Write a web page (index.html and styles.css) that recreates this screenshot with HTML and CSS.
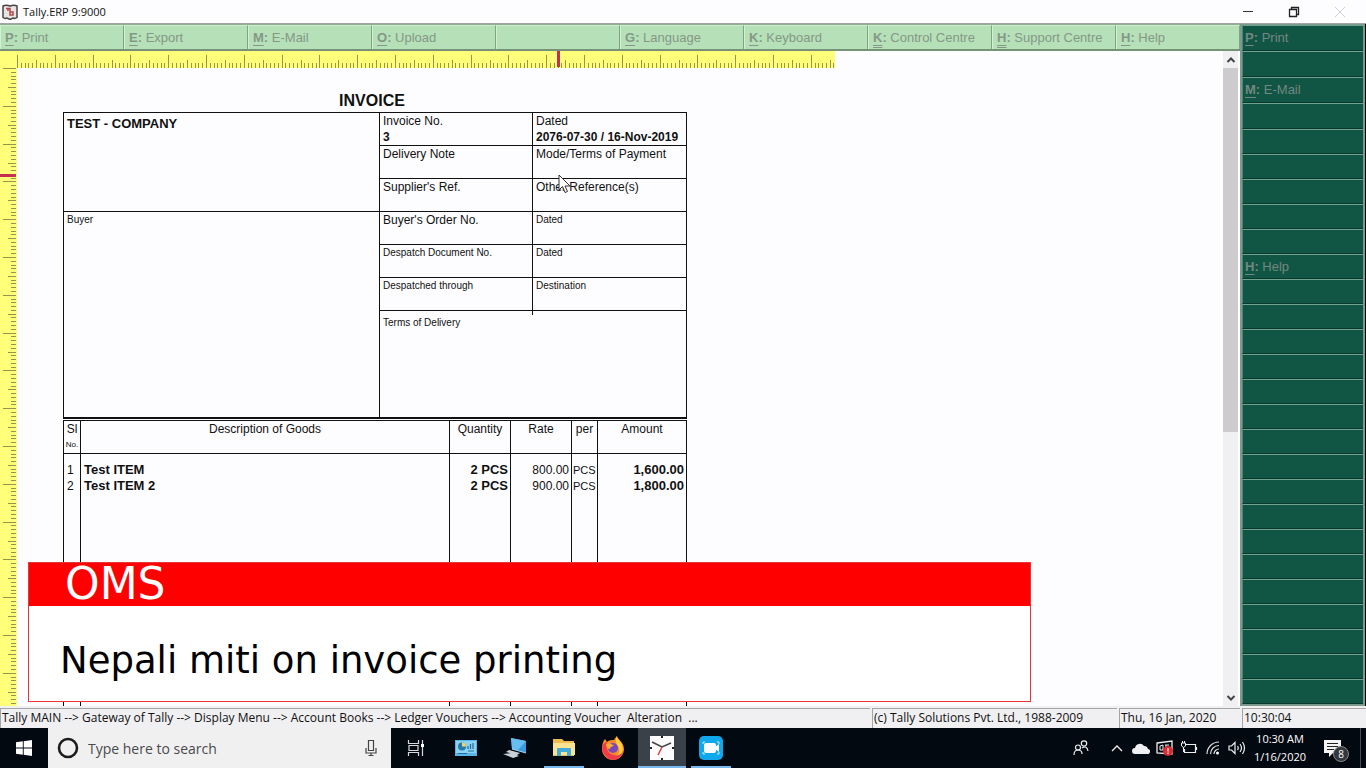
FILE: index.html
```
<!DOCTYPE html>
<html lang="en">
<head>
  <meta charset="UTF-8" />
  <title>Tally.ERP 9:9000</title>
  <link rel="stylesheet" href="styles.css">
</head>
<body>
  <header class="titlebar">
    <svg class="app-icon" width="16" height="16" viewBox="0 0 16 16">
      <path d="M1 2q3-1.500 7 0q4-1.500 7 0v11.500q-2 1.500-4 .5l-3 1.500-3-1.500q-2 1-4-.5z" fill="#e9e4e4" stroke="#4a4444" stroke-width="1.500"/>
      <path d="M4 4.500h4v3M6 4v3M8 8h3v3H8z" fill="none" stroke="#b0484c" stroke-width="1.500"/>
    </svg>
    <span class="app-title">Tally.ERP 9:9000</span>
    <div class="win-buttons">
      <button aria-label="Minimize"><svg width="12" height="12" viewBox="0 0 12 12"><path d="M1 5.500h10" stroke="#333" fill="none"/></svg></button>
      <button aria-label="Restore"><svg width="12" height="12" viewBox="0 0 12 12"><path d="M1.500 3.500h7v7h-7zM3.500 3V1.500h7v7H9" stroke="#222" stroke-width="1.300" fill="none"/></svg></button>
      <button aria-label="Close"><svg width="12" height="12" viewBox="0 0 12 12"><path d="M1 1l10 10M11 1L1 11" stroke="#d2d0d2" fill="none"/></svg></button>
    </div>
  </header>

  <main class="workspace">
    <section class="left">
      <nav class="toolbar">
        <button><b>P</b><i>:</i> Print</button>
        <button><b>E</b><i>:</i> Export</button>
        <button><b>M</b><i>:</i> E-Mail</button>
        <button><b>O</b><i>:</i> Upload</button>
        <button aria-label="Empty"></button>
        <button><b>G</b><i>:</i> Language</button>
        <button><b>K</b><i>:</i> Keyboard</button>
        <button><b class="dbl">K</b><i>:</i> Control Centre</button>
        <button><b class="dbl">H</b><i>:</i> Support Centre</button>
        <button><b>H</b><i>:</i> Help</button>
      </nav>

      <div class="viewer">
        <div class="page">
          <div class="ruler-h">
            <svg width="100%" height="17" shape-rendering="crispEdges">
              <path d="M17 14.500H2000" stroke-width="5" stroke-dasharray="1 2.780"/>
              <path d="M36 13H2000" stroke-width="8" stroke-dasharray="1 36.800"/>
              <path d="M17 10.500H2000" stroke-width="13" stroke-dasharray="1 36.800"/>
            </svg>
            <span class="mark"></span>
          </div>
          <div class="sheet">
            <div class="ruler-v">
              <svg width="16" height="100%" shape-rendering="crispEdges">
                <path d="M13.500 0V2000" stroke-width="5" stroke-dasharray="1 2.780"/>
                <path d="M12 19V2000" stroke-width="8" stroke-dasharray="1 36.800"/>
                <path d="M9.500 0V2000" stroke-width="13" stroke-dasharray="1 36.800"/>
              </svg>
              <span class="mark"></span>
            </div>

            <article class="invoice">
              <h1>INVOICE</h1>
              <div class="head">
                <div class="party">
                  <div class="company">TEST - COMPANY</div>
                  <div class="buyer">Buyer</div>
                </div>
                <div class="info">
                  <div>Invoice No.<strong>3</strong></div>
                  <div>Dated<strong>2076-07-30 / 16-Nov-2019</strong></div>
                  <div>Delivery Note</div>
                  <div>Mode/Terms of Payment</div>
                  <div>Supplier's Ref.</div>
                  <div>Other Reference(s)</div>
                  <div>Buyer's Order No.</div>
                  <div class="small">Dated</div>
                  <div class="small">Despatch Document No.</div>
                  <div class="small">Dated</div>
                  <div class="small">Despatched through</div>
                  <div class="small">Destination</div>
                  <div class="small terms">Terms of Delivery</div>
                </div>
              </div>
              <table class="items">
                <colgroup>
                  <col class="c-sl"><col><col class="c-qty"><col class="c-rate"><col class="c-per"><col class="c-amt">
                </colgroup>
                <thead>
                  <tr><th class="sl">Sl<small>No.</small></th><th>Description of Goods</th><th>Quantity</th><th>Rate</th><th>per</th><th>Amount</th></tr>
                </thead>
                <tbody>
                  <tr class="first"><td>1</td><td class="item">Test ITEM</td><td class="num bold">2 PCS</td><td class="num">800.00</td><td class="per">PCS</td><td class="num bold">1,600.00</td></tr>
                  <tr><td>2</td><td class="item">Test ITEM 2</td><td class="num bold">2 PCS</td><td class="num">900.00</td><td class="per">PCS</td><td class="num bold">1,800.00</td></tr>
                  <tr class="rest"><td></td><td></td><td></td><td></td><td></td><td></td></tr>
                </tbody>
              </table>
            </article>
          </div>
        </div>
        <div class="scrollbar">
          <button aria-label="Scroll up"><svg width="10" height="8" viewBox="0 0 10 8"><path d="M1.500 6L5 2.500 8.500 6" stroke="#444" stroke-width="2" fill="none"/></svg></button>
          <div class="track"><div class="thumb"></div></div>
          <button aria-label="Scroll down"><svg width="10" height="8" viewBox="0 0 10 8"><path d="M1.500 2L5 5.500 8.500 2" stroke="#444" stroke-width="2" fill="none"/></svg></button>
        </div>
      </div>
    </section>

    <aside class="sidebar">
      <button><b>P</b><i>:</i> Print</button>
      <button aria-label="Empty"></button>
      <button><b>M</b><i>:</i> E-Mail</button>
      <button aria-label="Empty"></button>
      <button aria-label="Empty"></button>
      <button aria-label="Empty"></button>
      <button aria-label="Empty"></button>
      <button aria-label="Empty"></button>
      <button aria-label="Empty"></button>
      <button><b>H</b><i>:</i> Help</button>
      <button aria-label="Empty"></button>
      <button aria-label="Empty"></button>
      <button aria-label="Empty"></button>
      <button aria-label="Empty"></button>
      <button aria-label="Empty"></button>
      <button aria-label="Empty"></button>
      <button aria-label="Empty"></button>
      <button aria-label="Empty"></button>
      <button aria-label="Empty"></button>
      <button aria-label="Empty"></button>
      <button aria-label="Empty"></button>
      <button aria-label="Empty"></button>
      <button aria-label="Empty"></button>
      <button aria-label="Empty"></button>
      <button aria-label="Empty"></button>
      <button aria-label="Empty"></button>
      <button aria-label="Empty"></button>
    </aside>
  </main>

  <footer class="status">
    <span class="path">Tally MAIN --&gt; Gateway of Tally --&gt; Display Menu --&gt; Account Books --&gt; Ledger Vouchers --&gt; Accounting Voucher&nbsp; Alteration&nbsp; ...</span>
    <span class="copy">(c) Tally Solutions Pvt. Ltd., 1988-2009</span>
    <span class="date">Thu, 16 Jan, 2020</span>
    <span class="time">10:30:04</span>
  </footer>

  <div class="taskbar">
    <button class="start" aria-label="Start">
      <svg width="16" height="16" viewBox="0 0 16 16"><path d="M0 2.300l6.800-1v6.200H0zM7.700 1.200L16 0v7.500H7.700zM0 8.500h6.800v6.200l-6.800-1zM7.700 8.500H16V16l-8.300-1.200z" fill="#fff"/></svg>
    </button>
    <label class="search">
      <svg width="22" height="22" viewBox="0 0 22 22"><circle cx="11" cy="11" r="9" fill="none" stroke="#1c1c1e" stroke-width="2.600"/></svg>
      <input type="text" placeholder="Type here to search" aria-label="Search">
      <svg width="14" height="18" viewBox="0 0 14 18"><path d="M4.500 1.500h5v10h-5zM2 9v5h10V9M7 14v3M4.500 16.500h5" fill="none" stroke="#444" stroke-width="1.200"/></svg>
    </label>

    <div class="apps">
      <button aria-label="Task View">
        <svg width="18" height="16" viewBox="0 0 18 16"><path d="M1.500 0v3.500h10V0M1.500 16v-3.500h10V16M2 5.500h9v5H2zM15.500 0v16" fill="none" stroke="#d8d8dc" stroke-width="1.200"/><path d="M14 4h3v3h-3z" fill="#fff"/></svg>
      </button>
      <button aria-label="Control Panel">
        <svg width="22" height="16" viewBox="0 0 22 16"><path d="M0 0h22v16H0z" fill="#58b5e6"/><path d="M1 1h20v12H1z" fill="#8bd3f5"/><circle cx="7" cy="6.500" r="4" fill="#2779a8"/><path d="M7 6.500V2.500a4 4 0 0 1 4 4z" fill="#f5d56a"/><path d="M13 9V6M15.500 9V4M18 9V3M13 11h6M3 13.500h9" stroke="#236b9c" stroke-width="1.200"/></svg>
      </button>
      <button aria-label="Computer">
        <svg width="24" height="22" viewBox="0 0 24 22"><path d="M8 1l15 3v12L9 12z" fill="#379de0"/><path d="M8 1l15 3-8 9-6-1z" fill="#65bdf0"/><path d="M9 12l14 4" stroke="#a9d7ef"/><path d="M6 13l11 3-3 2-11-3zM0 17l9-1 7 3-6 2z" fill="#c9d2d8"/></svg>
      </button>
      <button class="running" aria-label="File Explorer">
        <svg width="22" height="20" viewBox="0 0 22 20"><path d="M0 1h9l2 2h10v15H0z" fill="#edbd51"/><path d="M0 5h22v12H0z" fill="#fce293"/><path d="M4 18v-7q0-1 1-1h12q1 0 1 1v7h-4v-4H8v4z" fill="#43abd8"/></svg>
      </button>
      <button aria-label="Firefox">
        <svg width="24" height="24" viewBox="0 0 24 24"><path d="M4 3l2 3c2-2 5-2 7-2 1-2 2-3 3-4 0 3 7 6 7 13a11 11 0 0 1-22 0C1 9 2 5 4 3z" fill="#ff8b27"/><path d="M16 0c0 4 4 5 5 9 3 7-4 14-10 13 7-2 9-7 6-12-2-3-3-5-1-10z" fill="#ffd33e"/><path d="M1.200 11c0 6 4 12 10.800 13 5 0 9-4 10-8-4 5-13 5-16-3-1-3 0-6 0-7-2 0-4 2-4.800 5z" fill="#f23a4d"/><circle cx="12" cy="12" r="5" fill="#7948bd"/><path d="M5 8c3-2 5 1 8 1-1 2-4 1-4 4-2 0-4-2-4-5z" fill="#ffae32"/></svg>
      </button>
      <button class="active" aria-label="Tally">
        <svg width="24" height="24" viewBox="0 0 24 24"><path d="M0 0h24v24H0z" fill="#fcfcfc"/><path d="M12 0v2M12 22v2M0 12h2M22 12h2" stroke="#222" stroke-width="2"/><path d="M2 6l10 5 9-4" fill="none" stroke="#444" stroke-width="1.500"/><path d="M12 11l-4 8" stroke="#d94545" stroke-width="1.500"/></svg>
      </button>
      <button class="running" aria-label="Zoom">
        <svg width="24" height="24" viewBox="0 0 24 24"><rect width="24" height="24" rx="5" fill="#10a8ec"/><rect x="5" y="7" width="12" height="10" rx="2" fill="#f4fcff"/><path d="M16 11l4-3v8l-4-3z" fill="#f4fcff"/><path d="M4 8V6h2M18 6h2v2M4 16v2h2M18 18h2v-2" fill="none" stroke="#c7effd"/></svg>
      </button>
    </div>

    <div class="tray">
      <button class="people" aria-label="People"><svg width="16" height="16" viewBox="0 0 16 16"><g fill="none" stroke="#eee" stroke-width="1.200"><circle cx="11" cy="3.500" r="2.700"/><circle cx="5" cy="7.500" r="2.500"/><path d="M1 15q0-5 4-5t4 4M9 8q5-3 6 3"/></g></svg></button>
      <button aria-label="Show hidden icons"><svg width="12" height="8" viewBox="0 0 12 8"><path d="M1 7l5-5 5 5" fill="none" stroke="#eee" stroke-width="1.300"/></svg></button>
      <button aria-label="OneDrive"><svg width="18" height="11" viewBox="0 0 18 11"><path d="M3 11a3 3 0 0 1 0-6 5 5 0 0 1 9-2 4 4 0 0 1 4 3 2.500 2.500 0 0 1-1 5z" fill="#f0f0f2"/></svg></button>
      <button aria-label="Security alert"><svg width="18" height="16" viewBox="0 0 18 16"><path d="M1 3l15-2v13L1 13z" fill="none" stroke="#eee" stroke-width="1.300"/><path d="M4 10V6l3-1v5zM9 5h4M10 5v4" stroke="#eee" fill="none"/><circle cx="12" cy="11" r="5" fill="#e02a31"/><path d="M12 8v3.500M12 12.500v1.500" stroke="#fff" stroke-width="1.300"/></svg></button>
      <button aria-label="Battery"><svg width="18" height="14" viewBox="0 0 18 14"><path d="M6 3.500h9.500v8h-11V8M16.500 6v3" fill="none" stroke="#eee" stroke-width="1.200"/><path d="M1.500 2v3q2 3 4 0V2zM2.500 0v2M4.500 0v2M3.500 6v5" fill="none" stroke="#eee"/></svg></button>
      <button aria-label="Wi-Fi"><svg width="14" height="14" viewBox="0 0 14 14"><g fill="none" stroke="#ddd" stroke-width="1.200"><path d="M1 13A12 12 0 0 1 13 1M4.500 13A8.500 8.500 0 0 1 13 4.500M8 13a5 5 0 0 1 5-5"/></g><circle cx="11.500" cy="12" r="1.500" fill="#fff"/></svg></button>
      <button aria-label="Volume"><svg width="18" height="14" viewBox="0 0 18 14"><path d="M1 5h2.500L7 1.500v11L3.500 9H1zM9.500 5q1.500 2 0 4M12 3q3 4 0 8M14.500 1q4 6 0 12" fill="none" stroke="#eee" stroke-width="1.200"/></svg></button>
      <div class="clock"><span>10:30 AM</span><span>1/16/2020</span></div>
      <button class="notes" aria-label="Notifications">
        <svg width="17" height="17" viewBox="0 0 17 17"><path d="M0 0h17v13H9l-4 4v-4H0z" fill="#f5f5f5"/><path d="M3 3.500h11M3 6.500h11M3 9.500h7" stroke="#222"/></svg>
        <span class="badge">8</span>
      </button>
    </div>
  </div>

  <!-- caption over the window -->
  <div class="caption">
    <div class="caption-head">OMS</div>
    <div class="caption-text">Nepali miti on invoice printing</div>
  </div>

  <svg class="pointer" width="13" height="20" viewBox="0 0 13 20"><path d="M1 1v15l3.500-3.500L7 18.500l2.500-1L7 12h5z" fill="#fff" stroke="#333"/></svg>
</body>
</html>
```

FILE: styles.css
```
* { box-sizing:border-box; }
body {
  display:flex; flex-direction:column; height:100vh; margin:0; overflow:hidden; position:relative;
  background:#fdfdff; color:#111; font-family:"Open Sans", "Noto Sans", sans-serif; font-size:12px;
}
button { border:0; padding:0; margin:0; background:none; font:inherit; color:inherit; }
svg { display:block; flex:none; }

/* title bar */
.titlebar { display:flex; align-items:center; height:24px; padding-left:2px; gap:5px; border-bottom:1px solid #a3a3a3; }
.app-title { flex:1; font-size:11px; }
.win-buttons { display:flex; }
.win-buttons button { width:46px; height:20px; display:flex; justify-content:center; align-items:center; }
.win-buttons button:last-child { margin-right:3px; }

.workspace { flex:1; display:flex; min-height:0; border-right:1px solid #000; }
.left { flex:1; min-width:0; display:flex; flex-direction:column; }

/* buttons with hot keys */
.toolbar { display:flex; height:27px; background:#b6e0b8; border-top:1px solid #8faf90; border-bottom:2px solid #769377; }
.toolbar button {
  flex:1; padding-left:4px; text-align:left; border-left:1px solid #d4f0d4; border-right:1px solid #7fa581;
  border-top:1px solid #cfedcf;
}
.toolbar button, .sidebar button { font-family:"Liberation Sans", Arial, sans-serif; font-size:13px; line-height:20px; white-space:nowrap; }
.toolbar button { color:#859887; }
.toolbar b, .sidebar b { text-decoration:underline; text-underline-offset:3px; text-decoration-thickness:1px; }
.toolbar b.dbl { text-decoration-style:double; }
.toolbar i, .sidebar i { font-style:normal; font-weight:bold; }

.sidebar {
  width:125px; display:grid; grid-template-rows:repeat(4, 26px) repeat(23, 1fr);
  background:#115544; border:2px solid #7b9a8d; border-top-width:1px;
}
.sidebar button {
  text-align:left; padding-left:2px; color:#738880; overflow:hidden;
  border-top:1px solid #6fa28f; border-left:1px solid #4f8572; border-bottom:1px solid #08392c;
}

/* page preview */
.viewer { flex:1; display:flex; min-height:0; }
.page { flex:1; min-width:0; display:flex; flex-direction:column; overflow:hidden; }
.ruler-h { width:68.250%; height:17px; flex:none; background:#ffff7a; position:relative; }
.ruler-v { width:17px; flex:none; background:#ffff7a; position:relative; overflow:hidden; }
.ruler-h path, .ruler-v path { stroke:#96964a; fill:none; }
.ruler-h .mark { position:absolute; left:557px; top:0; width:3px; height:16px; background:#c4314f; }
.ruler-v .mark { position:absolute; left:0; top:106px; width:16px; height:3px; background:#c4314f; }
.sheet { flex:1; min-height:0; display:flex; overflow:hidden; }

.invoice {
  width:624px; margin-left:46px; padding-top:24px; display:flex; flex-direction:column;
  font-family:"Liberation Sans", Arial, sans-serif; font-size:12px; line-height:16px;
}
.invoice h1 { margin:0; font-size:16px; line-height:18px; text-align:center; padding:0 6px 2px 0; }
.head { display:flex; border:1px solid #111; border-bottom:2px solid #111; }
.party { flex:1; display:flex; flex-direction:column; }
.company { height:99px; padding:3px; font-size:13px; font-weight:bold; border-bottom:1px solid #111; }
.buyer { padding:0 3px; font-size:10px; }
.info { width:307px; display:grid; grid-template-columns:153px 1fr; border-left:1px solid #111; }
.info div { height:33px; padding-left:3px; border-bottom:1px solid #111; white-space:nowrap; }
.info div:nth-child(odd):not(.terms) { border-right:1px solid #111; }
.info strong { display:block; }
.info .small { font-size:10px; line-height:15px; }
.info .terms { grid-column:span 2; height:106px; padding-top:4px; border-bottom:0; position:relative; }
.info .terms::before { content:""; position:absolute; left:152px; top:0; width:1px; height:4px; background:#111; }

.items { flex:1; width:100%; margin-top:1px; table-layout:fixed; border-collapse:collapse; border:1px solid #111; border-bottom:0; }
.c-sl { width:17px; }
.c-qty, .c-rate { width:61px; }
.c-per { width:26px; }
.c-amt { width:89px; }
.items th { height:33px; padding:0; font-weight:normal; vertical-align:top; border:1px solid #111; }
.items small { display:block; font-size:8px; }
.items td { height:16px; padding:0 3px; vertical-align:top; border-left:1px solid #111; white-space:nowrap; }
.items .first td { height:24px; padding-top:8px; }
.items .item, .items .bold { font-size:13px; font-weight:bold; }
.items .num { text-align:right; padding-right:2px; }
.items .per { padding:0 1px; font-size:11px; }
.items .first .per { padding-top:8px; }
.items .rest td { height:auto; }

.scrollbar { width:17px; display:flex; flex-direction:column; background:#f0eff1; border-right:2px solid #fdfdff; }
.scrollbar button { height:17px; display:flex; justify-content:center; align-items:center; }
.track { flex:1; }
.thumb { height:58.600%; background:#cdcbce; }

/* status bar */
.status { display:flex; gap:2px; height:22px; padding-top:2px; background:#f0eff1; white-space:nowrap; line-height:17px; }
.status span { padding-left:1px; border-top:1px solid #a5a5a5; border-left:1px solid #a5a5a5; overflow:hidden; font-size:12px; }
.path { flex:1; }
.copy { width:245px; }
.date { width:121px; }
.time { width:124px; }

/* taskbar */
.taskbar { display:flex; height:40px; background:#030911; color:#fff; }
.taskbar button { display:flex; justify-content:center; align-items:center; }
.start { width:48px; }
.search { width:343px; display:flex; align-items:center; gap:9px; padding:0 13px 0 9px; background:#f1f0f1; }
.search input { flex:1; min-width:0; padding:0; border:0; outline:0; background:none; font:14px "Open Sans", "Noto Sans", sans-serif; }
.search input::placeholder { color:#4a4a4c; opacity:1; }
.apps { flex:1; display:flex; gap:1px; }
.apps button { width:48px; border-bottom:2px solid transparent; border-top:2px solid transparent; }
.apps button:first-child { width:50px; }
.apps .active { background:#3b4149; border-top-color:#3b4149; border-bottom-color:#79b8ee; }
.apps .running { background:linear-gradient(#79b8ee, #79b8ee) center bottom / 40px 2px no-repeat border-box; }
.tray { display:flex; align-items:stretch; }
.tray button { width:24px; }
.tray .people { width:48px; }
.clock { width:62px; display:flex; flex-direction:column; justify-content:center; align-items:center; line-height:18px; font-size:11px; }
.tray .notes { width:50px; margin-right:5px; padding-right:6px; border-right:1px solid #4a4d52; position:relative; }
.badge {
  position:absolute; left:22px; top:18px; width:16px; height:16px; border-radius:50%;
  background:#34373c; border:1px solid #888; font-size:10px; line-height:14px; text-align:center;
}

/* caption and pointer lie over everything */
.caption { position:absolute; left:28px; bottom:66px; width:73.430%; border:1px solid #e8353a; background:#fff; font-family:"DejaVu Sans", Verdana, sans-serif; }
.caption-head { height:43px; padding-left:36px; background:#f00; color:#fff; font-size:44px; line-height:42px; }
.caption-text { height:95px; padding-left:31px; color:#000; font-size:37px; line-height:110px; }
.pointer { position:absolute; left:558px; top:174px; }
```
